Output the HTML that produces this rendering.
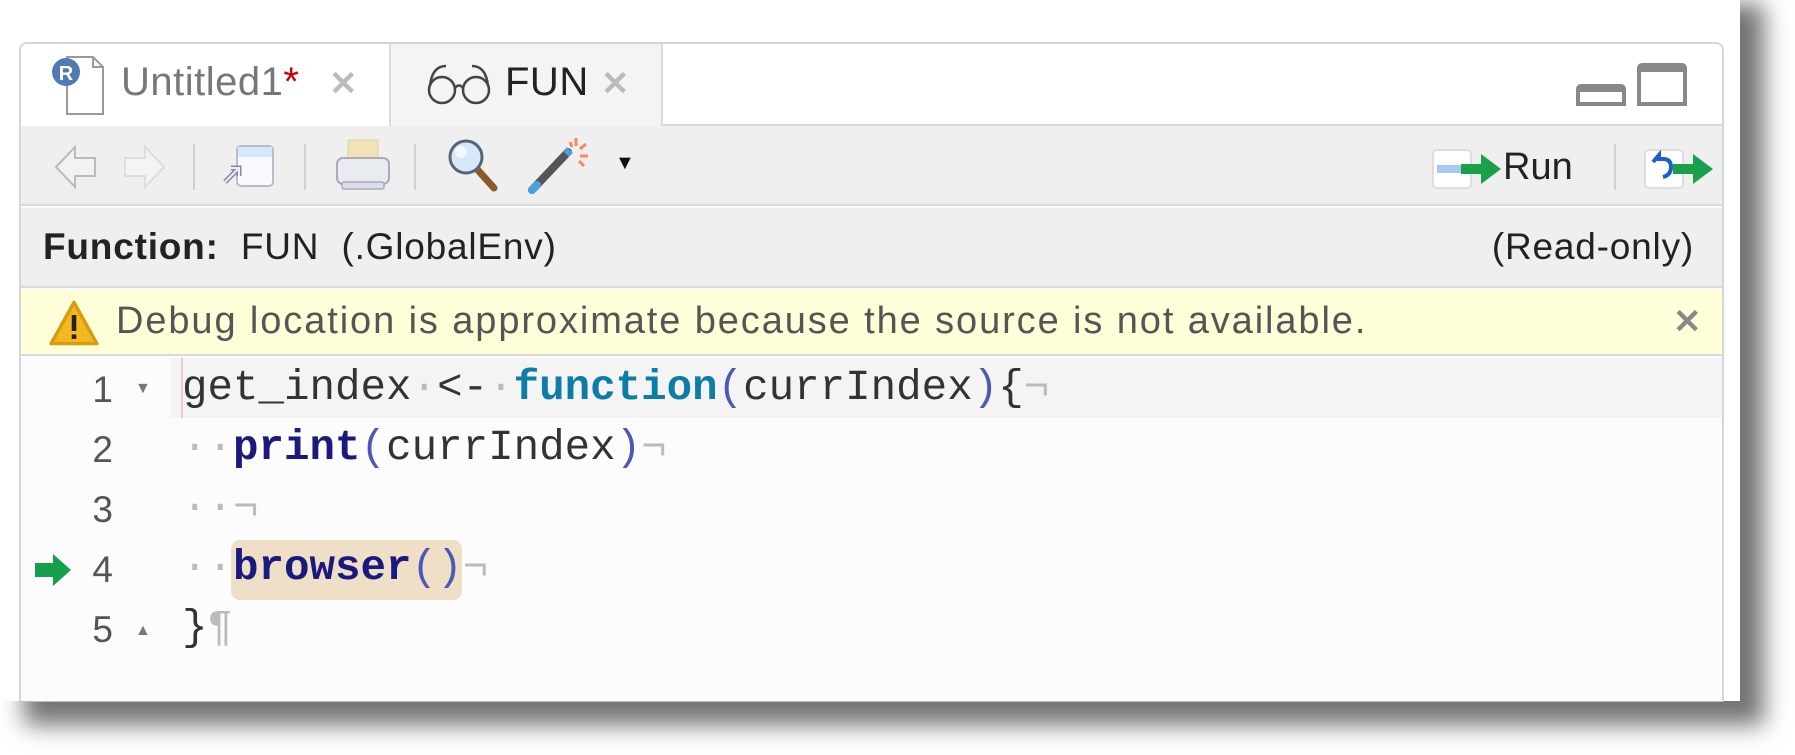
<!DOCTYPE html>
<html><head><meta charset="utf-8"><style>
*{margin:0;padding:0;box-sizing:border-box}
body{width:1795px;height:755px;background:#fff;position:relative;overflow:hidden;font-family:"Liberation Sans",sans-serif}
.card{position:absolute;left:0;top:-20px;width:1740px;height:721px;background:#fff;box-shadow:24px 24px 22px rgba(0,0,0,0.55)}
.panel{position:absolute;left:19px;top:42px;width:1705px;height:660px;border:2px solid #d3d6da;border-bottom:1px solid #bbb;border-radius:8px 8px 0 0;background:#fcfcfc;overflow:hidden}
.abs{position:absolute}
.tabbar{left:0;top:0;width:100%;height:82px;background:#fff;border-bottom:2px solid #d8dadd}
.tab1{left:0;top:0;width:370px;height:82px;background:#fff;border-right:2px solid #d8dadd}
.tab2{left:370px;top:0;width:272px;height:84px;background:#f4f4f4;border-right:2px solid #d8dadd}
.tt{font-size:40px;top:16px;letter-spacing:0.5px}
.toolbar{left:0;top:82px;width:100%;height:80px;background:#efefef;border-bottom:2px solid #d8dadd}
.fbar{left:0;top:164px;width:100%;height:80px;background:#efefef;border-bottom:2px solid #d8dadd}
.warn{left:0;top:246px;width:100%;height:66px;background:#fefed9;border-bottom:2px solid #d8dadd}
.sep{width:2px;height:46px;background:#d2d2d2;top:18px}
.code{font-family:"Liberation Mono",monospace;font-size:42.5px;line-height:60px;white-space:pre;left:161px}
.ln{font-family:"Liberation Sans",sans-serif;font-size:37px;line-height:60px;color:#555;width:72px;text-align:right;left:20px}
.d{color:#bbb}.k{color:#0d7ca6;font-weight:bold}.b{color:#1a1a7e;font-weight:bold}.p{color:#4a58b8}.t{color:#333}
</style></head><body>
<div class="card"></div>
<div class="panel">
 <div class="abs tabbar"></div>
 <div class="abs tab2"></div>
 <div class="abs tab1"></div>
 <svg class="abs" style="left:28px;top:10px" width="60" height="64" viewBox="0 0 60 64">
  <path d="M18 3h26l10 10v47H18z" fill="#fff" stroke="#999" stroke-width="2"/>
  <path d="M44 3v10h10" fill="none" stroke="#999" stroke-width="2"/>
  <circle cx="17" cy="18" r="14" fill="#4f7ab3"/>
  <text x="17" y="26" font-family="Liberation Sans" font-size="20" font-weight="bold" fill="#fff" text-anchor="middle">R</text>
 </svg>
 <div class="abs tt" style="left:100px;color:#777">Untitled1<span style="color:#c00">*</span></div>
 <div class="abs" style="left:308px;top:20px;font-size:34px;color:#bbb;font-weight:bold">✕</div>
 <svg class="abs" style="left:405px;top:18px" width="68" height="44" viewBox="0 0 68 44">
  <circle cx="16" cy="28" r="13" fill="none" stroke="#444" stroke-width="2.5"/>
  <circle cx="50" cy="28" r="13" fill="none" stroke="#444" stroke-width="2.5"/>
  <path d="M29 26q4-5 8 0M4 24Q6 4 20 4M62 24Q60 4 46 4" fill="none" stroke="#444" stroke-width="2.5"/>
 </svg>
 <div class="abs tt" style="left:484px;color:#222">FUN</div>
 <div class="abs" style="left:580px;top:20px;font-size:34px;color:#bbb;font-weight:bold">✕</div>
 <div class="abs" style="left:1555px;top:40px;width:50px;height:22px;border:4px solid #888;border-top-width:8px;border-radius:5px 5px 0 0;background:#fff"></div>
 <div class="abs" style="left:1616px;top:19px;width:50px;height:43px;border:4px solid #888;border-top-width:9px;border-radius:5px 5px 0 0;background:#fff"></div>

 <div class="abs toolbar">
  <svg class="abs" style="left:32px;top:16px" width="120" height="50" viewBox="0 0 120 50">
   <path d="M3 25L22 5v11h20v18H22v11z" fill="#f2f2f2" stroke="#bbb" stroke-width="2"/>
   <path d="M111 25L92 5v11H72v18h20v11z" fill="#f4f4f4" stroke="#ddd" stroke-width="2"/>
  </svg>
  <div class="abs sep" style="left:172px"></div>
  <svg class="abs" style="left:200px;top:12px" width="56" height="56" viewBox="0 0 56 56">
   <rect x="16" y="8" width="36" height="40" rx="4" fill="#f7f9fc" stroke="#bbc" stroke-width="2"/>
   <path d="M17 9h34v10H17z" fill="#d6e8fb"/>
   <path d="M4 44l14-14m-8 0h8v8" fill="none" stroke="#889" stroke-width="5"/>
   <path d="M4 44l14-14m-8 0h8v8" fill="none" stroke="#eef" stroke-width="2"/>
  </svg>
  <div class="abs sep" style="left:283px"></div>
  <svg class="abs" style="left:313px;top:10px" width="58" height="58" viewBox="0 0 58 58">
   <rect x="14" y="4" width="30" height="26" fill="#f2e2b8" stroke="#e0d0a0"/>
   <rect x="3" y="22" width="52" height="26" rx="6" fill="#e8ebf0" stroke="#aab" stroke-width="2"/>
   <rect x="8" y="46" width="42" height="7" rx="2" fill="#dde" stroke="#aab" stroke-width="1.5"/>
  </svg>
  <div class="abs sep" style="left:393px"></div>
  <svg class="abs" style="left:425px;top:10px" width="56" height="58" viewBox="0 0 56 58">
   <path d="M30 32l18 20" stroke="#8a5a2a" stroke-width="7" stroke-linecap="round"/>
   <circle cx="20" cy="21" r="16" fill="#d6e8fb" stroke="#567" stroke-width="3"/>
   <circle cx="15" cy="16" r="6" fill="#fff" opacity=".7"/>
  </svg>
  <svg class="abs" style="left:505px;top:8px" width="72" height="62" viewBox="0 0 72 62">
   <path d="M6 56L42 18" stroke="#555" stroke-width="8" stroke-linecap="round"/>
   <path d="M6 56l5-5" stroke="#4aa0d8" stroke-width="8" stroke-linecap="round"/>
   <path d="M40 20l4-4" stroke="#4aa0d8" stroke-width="8"/>
   <path d="M50 4v8M62 22h-8M60 10l-6 5M44 8l2 5M58 32l-5-5" stroke="#f58a55" stroke-width="3"/>
  </svg>
  <div class="abs" style="left:594px;top:26px;font-size:20px;color:#111">▼</div>
  <svg class="abs" style="left:1410px;top:22px" width="74" height="42" viewBox="0 0 74 42">
   <rect x="2" y="2" width="38" height="38" rx="4" fill="#fff" stroke="#ddd" stroke-width="2"/>
   <rect x="6" y="17" width="24" height="8" fill="#a8c8f0"/>
   <path d="M30 16h20V6l20 15-20 15V26H30z" fill="#1aa04a"/>
  </svg>
  <div class="abs" style="left:1482px;top:20px;font-size:38px;color:#222">Run</div>
  <div class="abs sep" style="left:1593px"></div>
  <svg class="abs" style="left:1622px;top:22px" width="74" height="42" viewBox="0 0 74 42">
   <rect x="2" y="2" width="38" height="38" rx="4" fill="#fff" stroke="#ddd" stroke-width="2"/>
   <path d="M10 14l6-7v4h4q8 0 8 8t-8 10" fill="none" stroke="#1a5fd0" stroke-width="4"/>
   <path d="M30 16h20V6l20 15-20 15V26H30z" fill="#1aa04a"/>
  </svg>
 </div>

 <div class="abs fbar">
  <div class="abs" style="left:22px;top:18px;font-size:37px;letter-spacing:0.8px;color:#222;white-space:pre"><b>Function:</b>  FUN  (.GlobalEnv)</div>
  <div class="abs" style="right:28px;top:18px;font-size:37px;letter-spacing:0.8px;color:#222">(Read-only)</div>
 </div>

 <div class="abs warn">
  <svg class="abs" style="left:26px;top:9px" width="54" height="48" viewBox="0 0 46 42">
   <path d="M23 3L43 39H3z" fill="#f3b720" stroke="#d89a10" stroke-width="3" stroke-linejoin="round"/>
   <rect x="21" y="14" width="4" height="14" fill="#222"/><rect x="21" y="31" width="4" height="4" fill="#222"/>
  </svg>
  <div class="abs" style="left:95px;top:10px;font-size:38px;color:#555;letter-spacing:1.9px;white-space:nowrap">Debug location is approximate because the source is not available.</div>
  <div class="abs" style="left:1652px;top:12px;font-size:34px;color:#888;font-weight:bold">✕</div>
 </div>

 <div class="abs" style="left:149px;top:314px;width:1560px;height:60px;background:#f4f4f4"></div>
 <div class="abs" style="left:160px;top:314px;width:2px;height:60px;background:#f2c8c8"></div>
 <div class="abs" style="left:210px;top:496px;width:231px;height:60px;background:#eedfc6;border-radius:9px"></div>
 <svg class="abs" style="left:12px;top:508px" width="40" height="36" viewBox="0 0 40 36"><path d="M2 11h18V2l18 16-18 16v-9H2z" fill="#14a04a"/></svg>
 <div class="abs ln" style="top:316px">1</div>
 <div class="abs ln" style="top:376px">2</div>
 <div class="abs ln" style="top:436px">3</div>
 <div class="abs ln" style="top:496px">4</div>
 <div class="abs ln" style="top:556px">5</div>
 <div class="abs" style="left:114px;top:336px;font-size:16px;color:#777">▼</div>
 <div class="abs" style="left:114px;top:578px;font-size:16px;color:#777">▲</div>
 <div class="abs code t" style="top:314px">get_index<span class="d">·</span>&lt;-<span class="d">·</span><span class="k">function</span><span class="p">(</span>currIndex<span class="p">)</span>{<span class="d">¬</span></div>
 <div class="abs code t" style="top:374px"><span class="d">··</span><span class="b">print</span><span class="p">(</span>currIndex<span class="p">)</span><span class="d">¬</span></div>
 <div class="abs code t" style="top:434px"><span class="d">··¬</span></div>
 <div class="abs code t" style="top:494px"><span class="d">··</span><span class="b">browser</span><span class="p">()</span><span class="d">¬</span></div>
 <div class="abs code t" style="top:554px">}<span class="d">¶</span></div>
</div>
</body></html>
